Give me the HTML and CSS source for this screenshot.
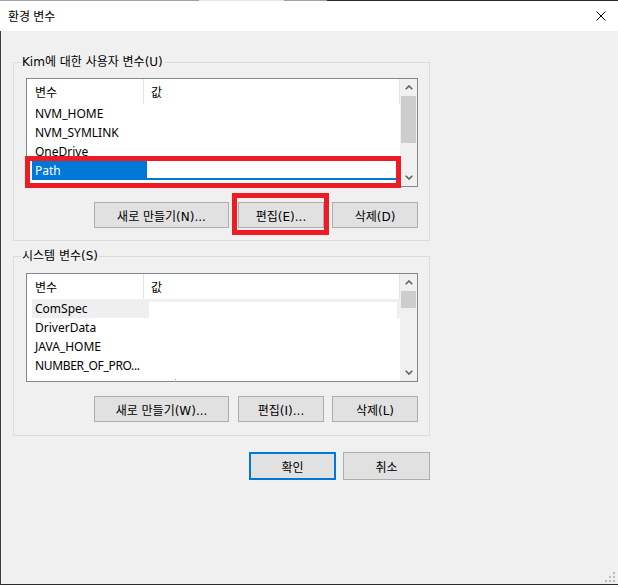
FILE: index.html
```html
<!DOCTYPE html>
<html lang="ko">
<head>
<meta charset="utf-8">
<title>환경 변수</title>
<link rel="stylesheet" href="styles.css">
</head>
<body>
<div class="window">
  <div class="topline"></div>
  <div class="titlebar">
    <span class="title">환경 변수</span>
    <svg class="close" viewBox="0 0 10 10" width="10" height="10"><path d="M0.5 0.5 L9.5 9.5 M9.5 0.5 L0.5 9.5" stroke="#000" stroke-width="1" fill="none"/></svg>
  </div>
  <div class="body">
    <div class="column">
      <fieldset class="group g1">
        <legend>Kim에 대한 사용자 변수(U)</legend>
        <div class="list">
          <div class="list-main">
            <div class="list-head"><div class="hcol name">변수</div><div class="hcol val">값</div></div>
            <div class="row"><div class="cell name">NVM_HOME</div></div>
            <div class="row"><div class="cell name">NVM_SYMLINK</div></div>
            <div class="row"><div class="cell name">OneDrive</div></div>
            <div class="row sel"><div class="cell name">Path</div><div class="cell val"></div></div>
          </div>
          <div class="scrollbar">
            <div class="sb-btn"><svg viewBox="0 0 8 5" width="8" height="5"><polyline points="0.7,4.3 4,1 7.3,4.3" fill="none" stroke="#606060" stroke-width="1.6"/></svg></div>
            <div class="sb-thumb t1"></div>
            <div class="sb-track"></div>
            <div class="sb-btn"><svg viewBox="0 0 8 5" width="8" height="5"><polyline points="0.7,0.7 4,4 7.3,0.7" fill="none" stroke="#606060" stroke-width="1.6"/></svg></div>
          </div>
          <div class="annot a1"></div>
        </div>
        <div class="buttons">
          <button class="btn wide">새로 만들기(N)...</button>
          <span class="mark"><button class="btn std">편집(E)...</button><span class="annot a2"></span></span>
          <button class="btn std">삭제(D)</button>
        </div>
      </fieldset>

      <fieldset class="group g2">
        <legend>시스템 변수(S)</legend>
        <div class="list">
          <div class="list-main">
            <div class="list-head"><div class="hcol name">변수</div><div class="hcol val">값</div></div>
            <div class="row hover"><div class="cell name">ComSpec</div><div class="cell val"></div></div>
            <div class="row"><div class="cell name">DriverData</div></div>
            <div class="row"><div class="cell name">JAVA_HOME</div></div>
            <div class="row"><div class="cell name trunc">NUMBER_OF_PRO...</div></div>
          </div>
          <div class="scrollbar">
            <div class="sb-btn"><svg viewBox="0 0 8 5" width="8" height="5"><polyline points="0.7,4.3 4,1 7.3,4.3" fill="none" stroke="#606060" stroke-width="1.6"/></svg></div>
            <div class="sb-thumb t2"></div>
            <div class="sb-track"></div>
            <div class="sb-btn"><svg viewBox="0 0 8 5" width="8" height="5"><polyline points="0.7,0.7 4,4 7.3,0.7" fill="none" stroke="#606060" stroke-width="1.6"/></svg></div>
          </div>
          <span class="dot"></span>
        </div>
        <div class="buttons">
          <button class="btn wide">새로 만들기(W)...</button>
          <button class="btn std">편집(I)...</button>
          <button class="btn std">삭제(L)</button>
        </div>
      </fieldset>

      <div class="dlg">
        <button class="btn dlgb default">확인</button>
        <button class="btn dlgb">취소</button>
      </div>
    </div>
    <svg class="grip" viewBox="0 0 10 10" width="10" height="10">
      <rect x="8" y="0" width="2" height="2" fill="#bcbcbc"/>
      <rect x="4" y="4" width="2" height="2" fill="#bcbcbc"/>
      <rect x="8" y="4" width="2" height="2" fill="#bcbcbc"/>
      <rect x="0" y="8" width="2" height="2" fill="#bcbcbc"/>
      <rect x="4" y="8" width="2" height="2" fill="#bcbcbc"/>
      <rect x="8" y="8" width="2" height="2" fill="#bcbcbc"/>
    </svg>
  </div>
</div>
</body>
</html>
```
FILE: styles.css
```css
* { box-sizing: border-box; }
html, body { margin: 0; padding: 0; }
body {
  font-family: "Noto Sans", "Noto Sans CJK KR", sans-serif;
  font-size: 12px;
  color: #000;
  background: #f0f0f0;
}
.window {
  width: 618px;
  height: 585px;
  display: flex;
  flex-direction: column;
}
.topline {
  height: 1px;
  background: linear-gradient(to right, #a0a0a0 0 199px, #e6e6e6 199px 284px, #a0a0a0 284px 327px, #2b2b2b 327px);
}
.titlebar {
  height: 30px;
  background: #fff;
  display: flex;
  align-items: center;
  justify-content: space-between;
  padding: 2px 12px 0 8px;
}
.title { font-size: 12px; line-height: 16px; }
.close { display: block; margin-top: -2px; }

.body {
  flex: 1;
  position: relative;
  background: #f0f0f0;
  border-left: 1px solid #3a3a44;
  border-bottom: 1px solid #2b2b2b;
  padding: 23px 0 0 12px;
}
.column {
  width: 417px;
  display: flex;
  flex-direction: column;
}
.group {
  margin: 0;
  min-width: 0;
  border: 1px solid #dcdcdc;
  padding: 8px 11px 12px 7px;
}
.group legend {
  padding: 0 1px;
  font-family: "DejaVu Sans", "Noto Sans CJK KR", sans-serif;
  font-size: 12px;
  line-height: 16px;
}
.g2 {
  margin-top: 7px;
  padding-top: 9px;
  padding-bottom: 13px;
}

.list {
  position: relative;
  margin-left: 5px;
  width: 392px;
  height: 109px;
  border: 1px solid #828790;
  background: #fff;
  display: flex;
}
.list-main { flex: 1; min-width: 0; }
.list-head {
  display: flex;
  height: 25px;
  border-right: 1px solid #e5e5e5;
}
.hcol { display: flex; align-items: center; }
.hcol.name {
  width: 117px;
  padding-left: 8px;
  border-right: 1px solid #e5e5e5;
}
.hcol.val { padding-left: 7px; }
.row {
  display: flex;
  height: 19px;
  margin-left: 5px;
}
.cell.name {
  width: 115px;
  padding-left: 3px;
  line-height: 19px;
  white-space: nowrap;
}
.cell.trunc { letter-spacing: -0.35px; }
.cell.val {
  flex: 1;
  background: #fff;
  margin-right: 3px;
}
.row.sel { background: #0078d7; color: #fff; }
.row.sel .cell.val { margin-bottom: 2px; }
.row.hover { background: #efefef; }
.row.hover .cell.name { width: 117px; }
.row.hover .cell.val { margin-top: 3px; }

.scrollbar {
  width: 17px;
  background: #f0f0f0;
  display: flex;
  flex-direction: column;
}
.sb-btn {
  height: 17px;
  display: flex;
  align-items: center;
  justify-content: center;
}
.sb-btn svg { display: block; }
.sb-thumb { background: #cdcdcd; margin: 0 1px; }
.t1 { height: 47px; }
.t2 { height: 17px; }
.sb-track { flex: 1; }

.dot {
  position: absolute;
  left: 148px;
  top: 105px;
  width: 1px;
  height: 1px;
  background: #9a9a9a;
}

.annot {
  position: absolute;
  border: 5px solid #ed1c24;
  pointer-events: none;
}
.a1 { left: -2px; top: 77px; width: 376px; height: 32px; }
.mark { position: relative; display: flex; }
.a2 { left: -6px; top: -9px; width: 97px; height: 42px; }

.buttons {
  display: flex;
  justify-content: flex-end;
  gap: 8px;
  margin-top: 15px;
}
.g2 .buttons { margin-top: 14px; }
.btn {
  height: 26px;
  border: 1px solid #adadad;
  background: #e1e1e1;
  font-family: "DejaVu Sans", "Noto Sans CJK KR", sans-serif;
  font-size: 12px;
  color: #000;
  padding: 0;
  margin: 0;
}
.btn.wide { width: 135px; margin-right: 1px; }
.btn.std { width: 86px; }
.dlg {
  display: flex;
  justify-content: flex-end;
  gap: 7px;
  margin-top: 16px;
}
.btn.dlgb { width: 87px; height: 28px; }
.btn.default { border: 2px solid #0078d7; }
.grip {
  position: absolute;
  right: 3px;
  bottom: 2px;
}
```
